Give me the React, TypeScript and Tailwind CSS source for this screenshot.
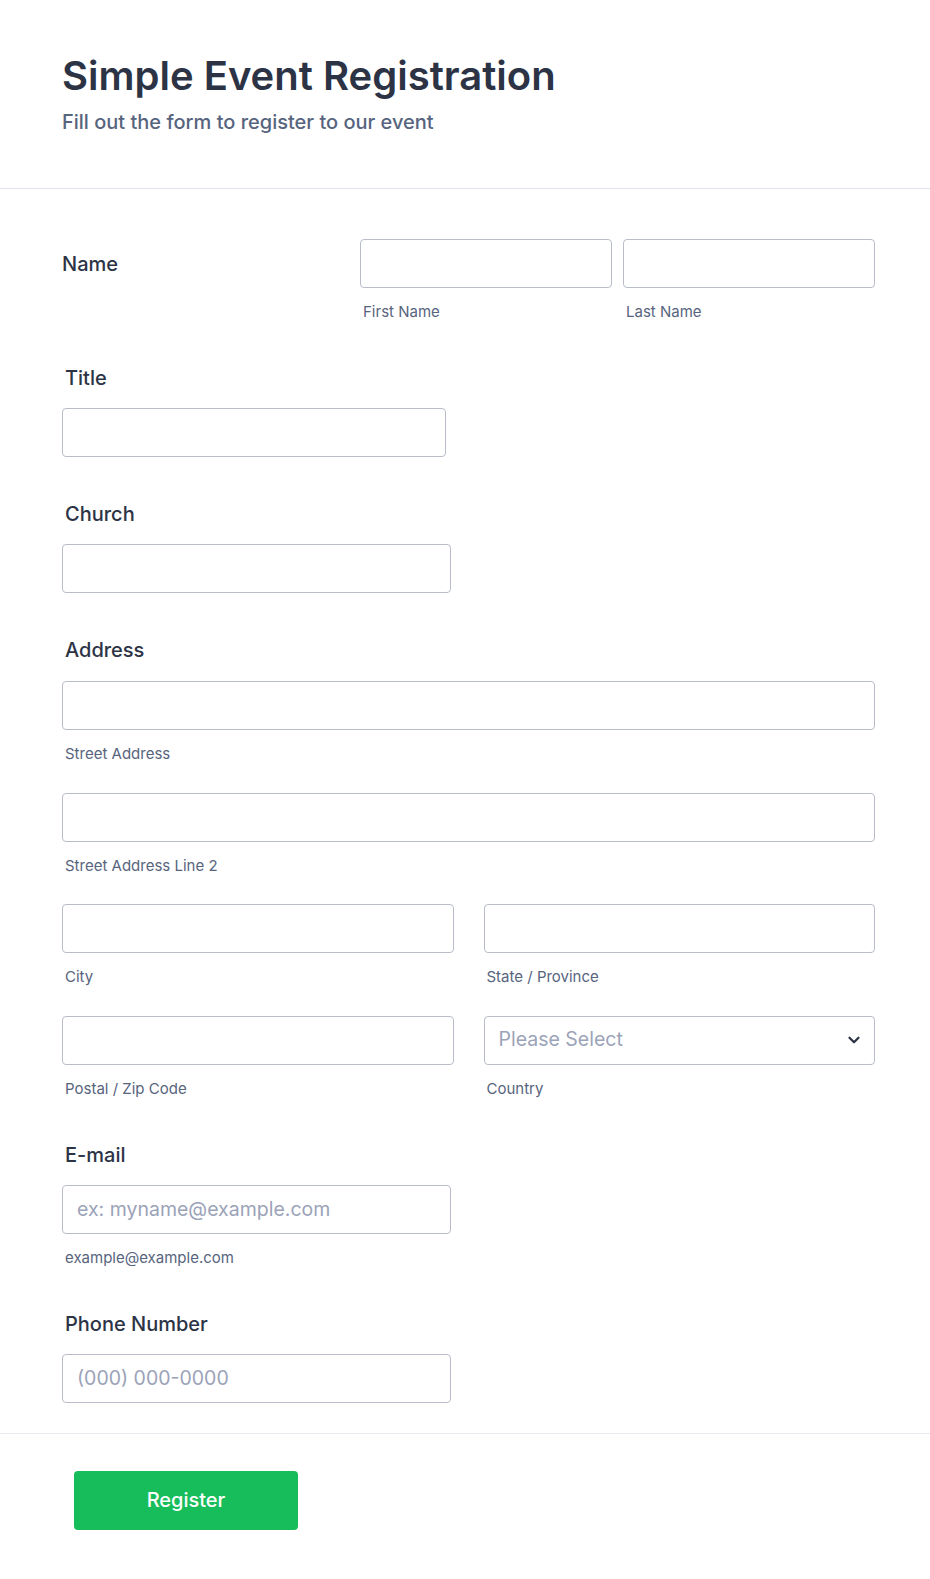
import { ChevronDown } from 'lucide-react'

const inputCls =
  'h-[49px] w-full rounded-[4px] border border-[#b8bdc9] bg-white px-[14px] text-[19.5px] text-[#2c3345] placeholder:text-[#9ba3b8] outline-none'

function Label({ children }: { children: React.ReactNode }) {
  return <div className="pl-[3px] text-[20px] leading-6 font-medium text-[#2c3345]">{children}</div>
}

function Sub({ children }: { children: React.ReactNode }) {
  return <div className="mt-[14px] pl-[3px] text-[15px] leading-5 text-[#57647e]">{children}</div>
}

function Field({ sub, placeholder }: { sub: string; placeholder?: string }) {
  return (
    <div className="flex-1">
      <input className={inputCls} placeholder={placeholder} />
      <Sub>{sub}</Sub>
    </div>
  )
}

export default function App() {
  return (
    <div className="min-h-[1579px] w-[930px] bg-white font-['Inter',sans-serif]">
      <div className="border-b border-[#dfe3ea] pt-[52px] pr-[55px] pb-[54px] pl-[62px]">
        <h1 className="text-[40px] leading-[48px] font-semibold text-[#2c3345]">
          Simple Event Registration
        </h1>
        <p className="mt-[10px] text-[20px] leading-6 font-medium text-[#57647e]">
          Fill out the form to register to our event
        </p>
      </div>

      <div className="pt-[50px] pr-[55px] pb-[30px] pl-[62px]">
        {/* name */}
        <div className="flex">
          <div className="w-[298px] pt-[13px] text-[20px] leading-6 font-medium text-[#2c3345]">Name</div>
          <div className="flex flex-1 gap-[11px]">
            <Field sub="First Name" />
            <Field sub="Last Name" />
          </div>
        </div>

        {/* title */}
        <div className="mt-[44px] w-[384px]">
          <Label>Title</Label>
          <input className={`${inputCls} mt-[18px]`} />
        </div>

        <div className="mt-[45px] w-[389px]">
          <Label>Church</Label>
          <input className={`${inputCls} mt-[18px]`} />
        </div>

        {/* address */}
        <div className="mt-[45px]">
          <Label>Address</Label>
          <div className="mt-[19px] flex flex-col gap-[28.5px]">
            <Field sub="Street Address" />
            <Field sub="Street Address Line 2" />
            <div className="flex gap-[30px]">
              <Field sub="City" />
              <Field sub="State / Province" />
            </div>
            <div className="flex gap-[30px]">
              <Field sub="Postal / Zip Code" />
              <div className="flex-1">
                <div className="flex h-[49px] items-center justify-between rounded-[4px] border border-[#b8bdc9] pr-[11px] pl-[14px]">
                  <span className="text-[19.5px] text-[#9ba3b8]">Please Select</span>
                  <ChevronDown size={18} strokeWidth={3} className="text-[#2c3345]" />
                </div>
                <Sub>Country</Sub>
              </div>
            </div>
          </div>
        </div>

        <div className="mt-[44px] w-[389px]">
          <Label>E-mail</Label>
          <input className={`${inputCls} mt-[18px]`} placeholder="ex: myname@example.com" />
          <Sub>example@example.com</Sub>
        </div>

        <div className="mt-[44px] w-[389px]">
          <Label>Phone Number</Label>
          <input className={`${inputCls} mt-[18px]`} placeholder="(000) 000-0000" />
        </div>
      </div>

      <div className="border-t border-[#e6e9ee] px-[74px] pt-[37px] pb-[60px]">
        <button className="h-[59px] w-[224px] rounded-[4px] bg-[#18bd5b] text-[20px] font-medium text-white">
          Register
        </button>
      </div>
    </div>
  )
}
